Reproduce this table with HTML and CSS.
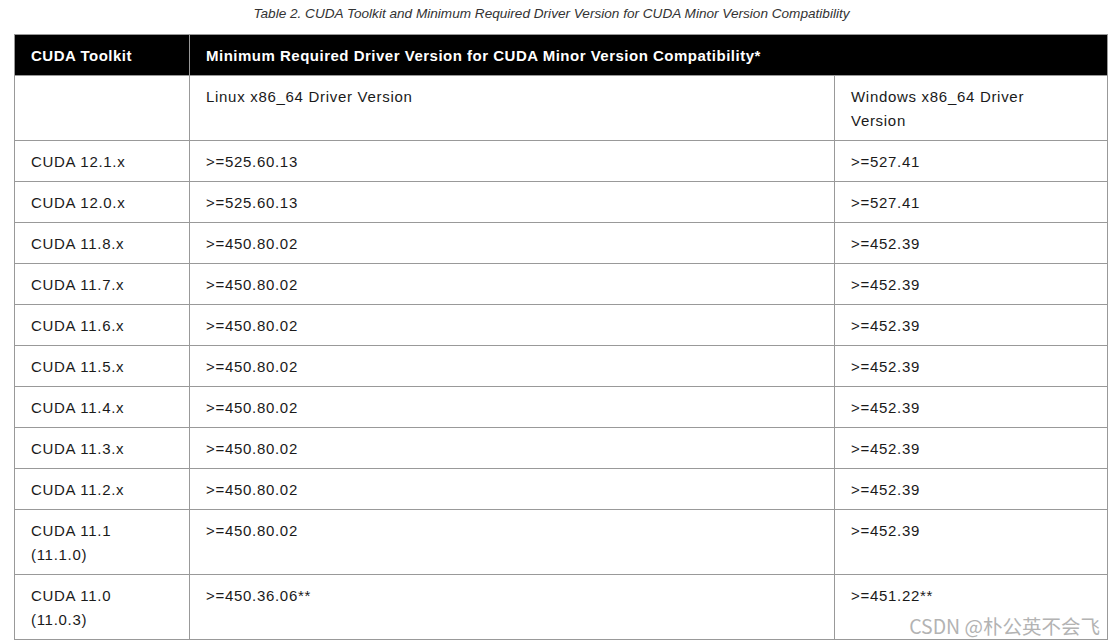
FILE: index.html
```html
<!DOCTYPE html>
<html>
<head>
<meta charset="utf-8">
<link rel="stylesheet" href="styles.css">
</head>
<body>
<div class="page">
  <p class="caption">Table 2. CUDA Toolkit and Minimum Required Driver Version for CUDA Minor Version Compatibility</p>
  <table class="compat">
    <colgroup>
      <col class="c1"><col class="c2"><col class="c3">
    </colgroup>
    <thead>
      <tr><th>CUDA Toolkit</th><th colspan="2">Minimum Required Driver Version for CUDA Minor Version Compatibility*</th></tr>
    </thead>
    <tbody>
      <tr><td></td><td>Linux x86_64 Driver Version</td><td class="win">Windows x86_64 Driver Version</td></tr>
      <tr><td>CUDA 12.1.x</td><td>&gt;=525.60.13</td><td>&gt;=527.41</td></tr>
      <tr><td>CUDA 12.0.x</td><td>&gt;=525.60.13</td><td>&gt;=527.41</td></tr>
      <tr><td>CUDA 11.8.x</td><td>&gt;=450.80.02</td><td>&gt;=452.39</td></tr>
      <tr><td>CUDA 11.7.x</td><td>&gt;=450.80.02</td><td>&gt;=452.39</td></tr>
      <tr><td>CUDA 11.6.x</td><td>&gt;=450.80.02</td><td>&gt;=452.39</td></tr>
      <tr><td>CUDA 11.5.x</td><td>&gt;=450.80.02</td><td>&gt;=452.39</td></tr>
      <tr><td>CUDA 11.4.x</td><td>&gt;=450.80.02</td><td>&gt;=452.39</td></tr>
      <tr><td>CUDA 11.3.x</td><td>&gt;=450.80.02</td><td>&gt;=452.39</td></tr>
      <tr><td>CUDA 11.2.x</td><td>&gt;=450.80.02</td><td>&gt;=452.39</td></tr>
      <tr><td>CUDA 11.1<br>(11.1.0)</td><td>&gt;=450.80.02</td><td>&gt;=452.39</td></tr>
      <tr><td>CUDA 11.0<br>(11.0.3)</td><td>&gt;=450.36.06**</td><td class="last">&gt;=451.22**<span class="wm">CSDN @朴公英不会飞</span></td></tr>
    </tbody>
  </table>
</div>
</body>
</html>
```
FILE: styles.css
```css
html, body {
  margin: 0;
  padding: 0;
  background: #fff;
}
.page {
  padding: 0 10px 0 14px;
  font-family: "Liberation Sans", Arial, sans-serif;
  color: #1a1a1a;
}
.caption {
  margin: 0;
  height: 34px;
  padding-top: 6px;
  box-sizing: border-box;
  text-align: center;
  font-style: italic;
  font-size: 13.6px;
  line-height: 16px;
  color: #333;
  padding-right: 18px;
}
.compat {
  border-collapse: collapse;
  width: 1093px;
  table-layout: fixed;
  font-size: 15px;
  line-height: 24px;
  letter-spacing: 0.7px;
}
.c1 { width: 175px; }
.c2 { width: 645px; }
.c3 { width: 273px; }
.compat th {
  background: #000;
  color: #fff;
  font-weight: bold;
  letter-spacing: 0.5px;
  text-align: left;
  padding: 9px 16px 7px;
  border-left: 1px solid #999;
  border-right: 1px solid #999;
  border-top: 1px solid #999;
}
.compat td {
  vertical-align: top;
  padding: 9px 16px 7px;
  border: 1px solid #999;
}
.compat td.win {
  padding-right: 40px;
}
.last {
  position: relative;
}
.wm {
  position: absolute;
  right: 7px;
  bottom: 1px;
  font-family: "Noto Sans CJK SC", sans-serif;
  font-size: 19.5px;
  line-height: 24px;
  letter-spacing: 0;
  color: #b3b3b3;
  white-space: nowrap;
}
```
